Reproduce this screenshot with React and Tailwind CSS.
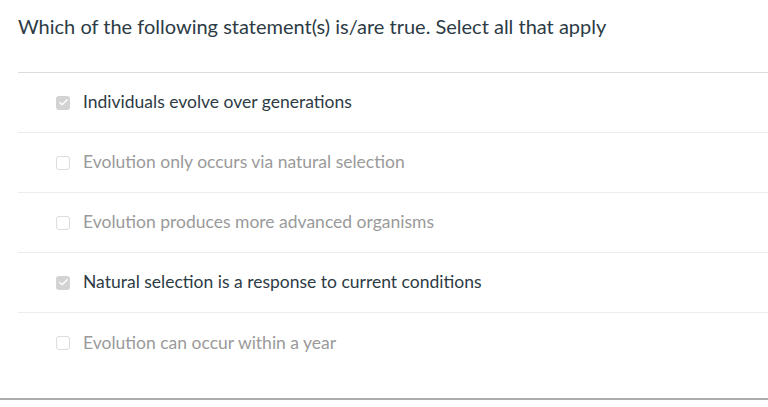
import { Check } from 'lucide-react';

const OPTIONS = [
  { id: 1, text: 'Individuals evolve over generations', checked: true },
  { id: 2, text: 'Evolution only occurs via natural selection', checked: false },
  { id: 3, text: 'Evolution produces more advanced organisms', checked: false },
  { id: 4, text: 'Natural selection is a response to current conditions', checked: true },
  { id: 5, text: 'Evolution can occur within a year', checked: false },
];

function Box({ checked }) {
  if (checked) {
    return (
      <span className="flex h-[14px] w-[14px] shrink-0 items-center justify-center rounded-[3px] bg-[#d3d3d3]">
        <Check className="h-[11px] w-[11px] text-white" strokeWidth={3} />
      </span>
    );
  }
  return <span className="h-[14px] w-[14px] shrink-0 rounded-[3px] border border-[#dcdcdc] bg-white" />;
}

export default function App() {
  return (
    <div className="h-[407px] w-full bg-white font-['Lato','Liberation_Sans',sans-serif]">
      <div className="pl-[18px]">
        <h1 className="pt-[12px] text-[20px] leading-[28px] text-[#2d3b45]">
          Which of the following statement(s) is/are true. Select all that apply
        </h1>
        <div className="mt-[32px] border-t border-[#dcdcdc]">
          {OPTIONS.map((o, i) => (
            <div
              key={o.id}
              className={`flex h-[60px] items-center gap-[13px] pl-[38px] ${
                i < OPTIONS.length - 1 ? 'border-b border-[#ececec]' : ''
              }`}
            >
              <Box checked={o.checked} />
              <span className={`text-[17.5px] ${o.checked ? 'text-[#2d3b45]' : 'text-[#9a9a9a]'}`}>
                {o.text}
              </span>
            </div>
          ))}
        </div>
      </div>
      <div className="mt-[25px] border-t-2 border-[#acacac]" />
    </div>
  );
}
